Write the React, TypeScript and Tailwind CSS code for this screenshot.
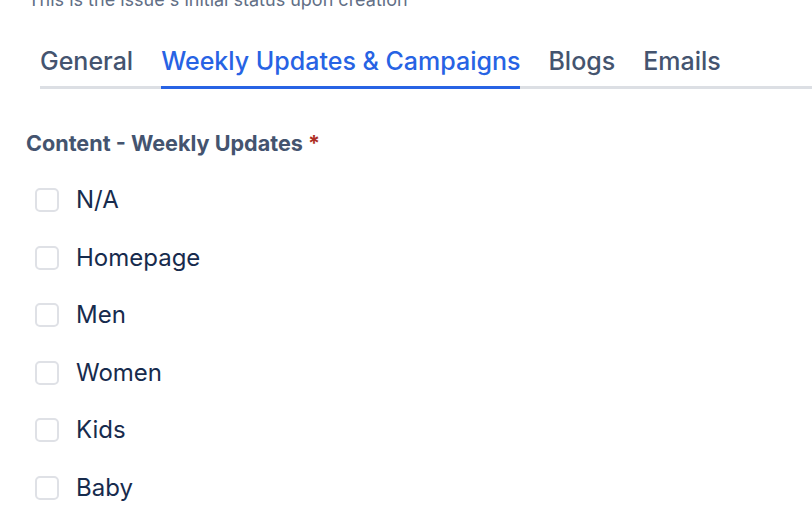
import { useState } from "react";

const tabs = ["General", "Weekly Updates & Campaigns", "Blogs", "Emails"];
const options = ["N/A", "Homepage", "Men", "Women", "Kids", "Baby"];

export default function App() {
  const [active, setActive] = useState(1);
  const [checked, setChecked] = useState<string[]>([]);

  const toggle = (name: string) =>
    setChecked((prev) => (prev.includes(name) ? prev.filter((n) => n !== name) : [...prev, name]));

  return (
    <div className="h-[530px] w-[812px] overflow-hidden bg-white font-['Inter',sans-serif]">
      <p className="-mt-[10px] pl-[28px] text-[18px] leading-[20px] text-[#626f86]">
        This is the issue's initial status upon creation
      </p>

      <div className="ml-[40px] mt-[36px] flex gap-[28px] border-b-[3px] border-[#dcdfe4]">
        {tabs.map((tab, i) => (
          <button
            key={tab}
            type="button"
            onClick={() => setActive(i)}
            className={[
              "-mb-[3px] border-b-[3px] pb-[10px] text-[25px] font-medium leading-[30px]",
              i === active ? "border-[#2763e4] text-[#2763e4]" : "border-transparent text-[#44546f]",
            ].join(" ")}
          >
            {tab}
          </button>
        ))}
      </div>

      <div className="mt-[42px] pl-[26px] text-[21.6px] font-bold leading-[24px] text-[#44546f]">
        Content - Weekly Updates<span className="ml-[5px] text-[#ae2e24]">*</span>
      </div>

      <div className="mt-[33px] flex flex-col gap-[33.6px] pl-[35px]">
        {options.map((opt) => (
          <label key={opt} className="flex cursor-pointer items-center gap-[17px]">
            <input
              type="checkbox"
              checked={checked.includes(opt)}
              onChange={() => toggle(opt)}
              className="peer sr-only"
            />
            <span className="h-[24px] w-[24px] rounded-[5px] border-[2.5px] border-[#dfe1e6] bg-white peer-checked:border-[#2763e4] peer-checked:bg-[#2763e4]" />
            <span className="text-[24px] leading-[24px] text-[#172b4d]">{opt}</span>
          </label>
        ))}
      </div>
    </div>
  );
}
